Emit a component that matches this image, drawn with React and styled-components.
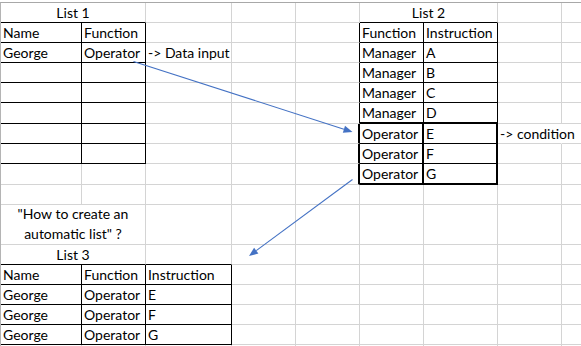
import React from 'react';
import styled, { createGlobalStyle } from 'styled-components';

const GlobalStyle = createGlobalStyle`
  html, body { margin: 0; padding: 0; background: #fff; }
  body { font-family: Lato, "Open Sans", sans-serif; color: #000; overflow: hidden; }
`;

const COLS = [81, 64, 86, 64, 64, 64, 74, 64, 64];
const ROWS = [20, 20, 20, 20, 20, 21, 20, 20, 21, 20, 40, 20, 20, 20, 20, 20, 20];

const Viewport = styled.div`
  position: relative;
  width: 581px;
  height: 346px;
  overflow: hidden;
  padding-top: 2px;
  box-sizing: border-box;
`;

const Sheet = styled.div`
  display: grid;
  grid-template-columns: ${COLS.map((c) => `${c}px`).join(' ')};
  grid-template-rows: ${ROWS.map((r) => `${r}px`).join(' ')};
  border-top: 1px solid #a8a8a8;
  border-left: 1px solid #b4b4b4;
  width: max-content;
`;

const GRID = '#d4d4d4';

const Cell = styled.div`
  box-sizing: border-box;
  grid-column: span ${(p) => p.$span || 1};
  border-right: ${(p) =>
    p.$r ? `${p.$r}px solid #000` : `1px solid ${p.$hideR ? '#fff' : GRID}`};
  border-bottom: ${(p) => (p.$b ? `${p.$b}px solid #000` : `1px solid ${GRID}`)};
  display: flex;
  align-items: flex-end;
  justify-content: ${(p) => (p.$center ? 'center' : 'flex-start')};
  text-align: ${(p) => (p.$center ? 'center' : 'left')};
  padding: 0 2px;
  font-size: 14px;
  line-height: ${(p) => (p.$wrap ? '20px' : '18px')};
  white-space: ${(p) => (p.$wrap ? 'normal' : 'nowrap')};
  overflow: visible;
  position: relative;
  z-index: ${(p) => (p.$hideR ? 1 : 0)};
`;

const Overlay = styled.svg`
  position: absolute;
  left: 0;
  top: 0;
  width: 581px;
  height: 346px;
  pointer-events: none;
  z-index: 2;
`;

const E = {};
const T = (text, extra = {}) => ({ text, r: 1, b: 1, ...extra });
const B = { r: 1, b: 1 };

const rows = [
  [{ span: 2, text: 'List 1', center: true, b: 1 }, E, E, E, { span: 2, text: 'List 2', center: true, b: 1 }, E, E],
  [T('Name'), T('Function'), E, E, { r: 1 }, T('Function'), T('Instruction'), E, E],
  [T('George'), T('Operator'), { text: '-> Data input' }, E, { r: 1 }, T('Manager'), T('A'), E, E],
  [B, B, E, E, { r: 1 }, T('Manager'), T('B'), E, E],
  [B, B, E, E, { r: 1 }, T('Manager'), T('C'), E, E],
  [B, B, E, E, { r: 1 }, T('Manager', { b: 2 }), T('D', { b: 2 }), E, E],
  [B, B, E, E, { r: 2 }, T('Operator', { r: 2 }), T('E', { r: 2 }), { text: '-> condition', hideR: true }, E],
  [B, B, E, E, { r: 2 }, T('Operator', { r: 2 }), T('F', { r: 2 }), E, E],
  [E, E, E, E, { r: 2 }, T('Operator', { r: 2, b: 2 }), T('G', { r: 2, b: 2 }), E, E],
  [E, E, E, E, E, E, E, E, E],
  [{ span: 2, text: '"How to create an automatic list" ?', center: true, wrap: true }, E, E, E, E, E, E, E],
  [{ span: 2, text: 'List 3', center: true, b: 1 }, { b: 1 }, E, E, E, E, E, E],
  [T('Name'), T('Function'), T('Instruction'), E, E, E, E, E, E],
  [T('George'), T('Operator'), T('E'), E, E, E, E, E, E],
  [T('George'), T('Operator'), T('F'), E, E, E, E, E, E],
  [T('George'), T('Operator'), T('G'), E, E, E, E, E, E],
  [E, E, E, E, E, E, E, E, E],
];

function head(x1, y1, x2, y2, len = 9, w = 3.6) {
  const dx = x2 - x1;
  const dy = y2 - y1;
  const d = Math.hypot(dx, dy);
  const ux = dx / d;
  const uy = dy / d;
  const bx = x2 - ux * len;
  const by = y2 - uy * len;
  const px = -uy * w;
  const py = ux * w;
  return {
    base: [bx, by],
    points: `${x2},${y2} ${bx + px},${by + py} ${bx - px},${by - py}`,
  };
}

const ARROWS = [
  [133.5, 61.5, 352.5, 132],
  [352.5, 179.5, 249, 256],
];

export default function App() {
  return (
    <>
      <GlobalStyle />
      <Viewport>
        <Sheet>
          {rows.map((row, ri) =>
            row.map((c, ci) => (
              <Cell
                key={`${ri}-${ci}`}
                $span={c.span}
                $r={c.r}
                $b={c.b}
                $center={c.center}
                $wrap={c.wrap}
                $hideR={c.hideR}
              >
                {c.text}
              </Cell>
            ))
          )}
        </Sheet>
        <Overlay viewBox="0 0 581 346">
          {ARROWS.map(([x1, y1, x2, y2], i) => {
            const h = head(x1, y1, x2, y2);
            return (
              <g key={i}>
                <line x1={x1} y1={y1} x2={h.base[0]} y2={h.base[1]} stroke="#4472c4" strokeWidth="1.1" />
                <polygon points={h.points} fill="#4472c4" />
              </g>
            );
          })}
        </Overlay>
      </Viewport>
    </>
  );
}
